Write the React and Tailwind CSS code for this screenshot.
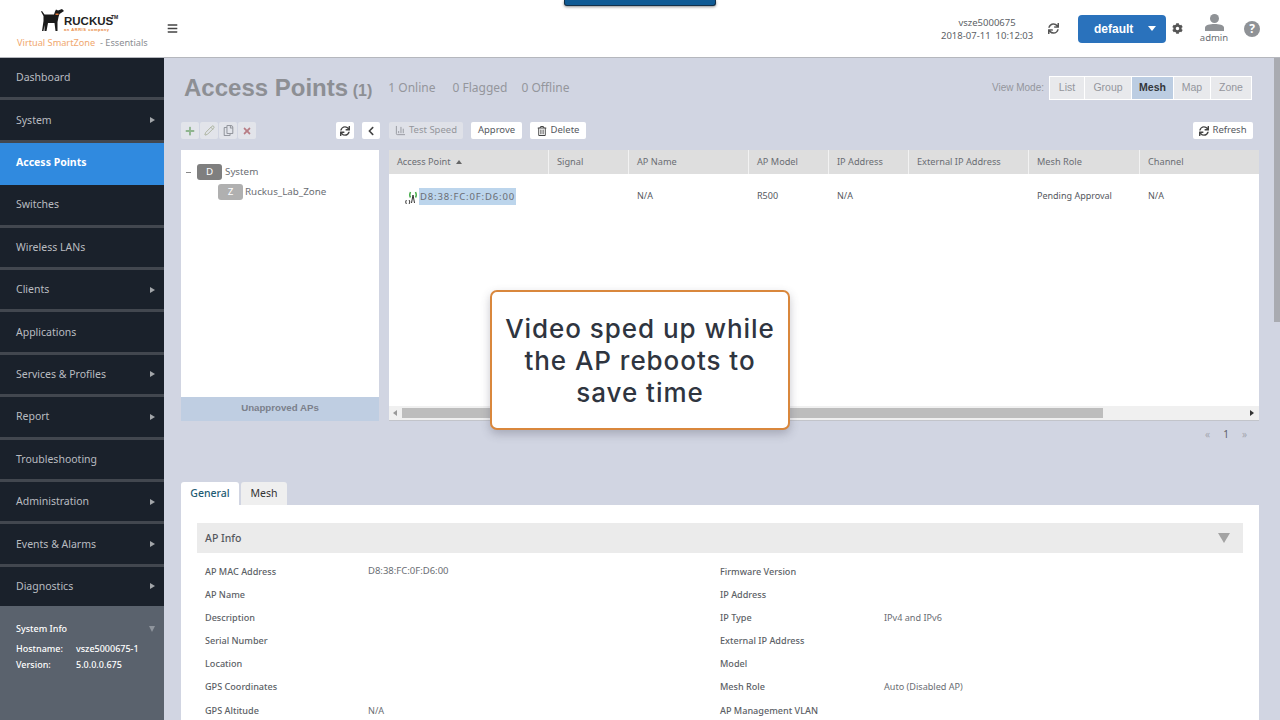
import React from "react";
import { Pencil, ChartColumn } from "lucide-react";
import { FaSync, FaCog, FaBars, FaPlus, FaRegCopy, FaTimes, FaChevronLeft, FaRegTrashAlt } from "react-icons/fa";

const F = { fontFamily: '"Noto Sans", "Open Sans", sans-serif' };
const A = { fontFamily: '"Liberation Sans", sans-serif' };

const nav = [
  ["Dashboard", 0], ["System", 1], ["Access Points", 0, true], ["Switches", 0], ["Wireless LANs", 0],
  ["Clients", 1], ["Applications", 0], ["Services & Profiles", 1], ["Report", 1], ["Troubleshooting", 0],
  ["Administration", 1], ["Events & Alarms", 1], ["Diagnostics", 1],
];

const cols = [
  ["Access Point", "w-[160px]"], ["Signal", "w-[80px]"], ["AP Name", "w-[120px]"], ["AP Model", "w-[80px]"],
  ["IP Address", "w-[80px]"], ["External IP Address", "w-[120px]"], ["Mesh Role", "w-[111px]"], ["Channel", "w-[119px]"],
];

const left = [["AP MAC Address", "D8:38:FC:0F:D6:00"], ["AP Name", ""], ["Description", ""], ["Serial Number", ""], ["Location", ""], ["GPS Coordinates", ""], ["GPS Altitude", "N/A"]];
const right = [["Firmware Version", ""], ["IP Address", ""], ["IP Type", "IPv4 and IPv6"], ["External IP Address", ""], ["Model", ""], ["Mesh Role", "Auto (Disabled AP)"], ["AP Management VLAN", ""]];

function Dog() {
  return (
    <svg width="23" height="22" viewBox="0 0 23 22" className="absolute left-[41px] top-[9px]">
      <path d="M0 2.5 L1 2 L3.5 5.5 L13 5.5 L14 2.5 L15 0.5 L17 1.5 L21 0 L23 2 L18.5 5 L17.5 8 L16.5 13 L16.5 22 L14.5 22 L13.5 14 L7 14 L5.5 22 L3.5 22 L3.5 16 L2.5 22 L1 22 L2.5 12 L2.5 7 Z" fill="#1a1a1a" />
      <rect x="14.5" y="4.5" width="3" height="1.5" fill="#e2783a" />
    </svg>
  );
}

function ToolBtn({ children, className = "" }) {
  return <div className={"h-[17px] w-[18px] rounded-[2px] flex items-center justify-center " + className}>{children}</div>;
}

function Rows({ rows, w, labelW }) {
  return (
    <div className={"flex flex-col pt-[0.5px] " + w}>
      {rows.map(([k, v]) => (
        <div key={k} className="flex items-center h-[23.2px] text-[9.1px] leading-none">
          <span className={"shrink-0 text-[#5c5f66] font-medium " + labelW}>{k}</span>
          <span className={"text-[#6a6d73] " + (v.startsWith("D8") ? "text-[9.5px]" : "text-[9.1px]")}>{v}</span>
        </div>
      ))}
    </div>
  );
}

export default function App() {
  return (
    <div style={F} className="relative h-[720px] w-[1280px] overflow-hidden bg-[#d1d5e2] flex flex-col">
      {/* header */}
      <header className="relative h-[58px] shrink-0 bg-white border-b border-[#b5b7bd] flex items-center">
        <div className="absolute left-[564px] top-0 h-[6px] w-[152px] bg-[#0f5a94] border-x border-b border-[#123049] rounded-b-[3px] shadow-[0_1px_3px_rgba(0,0,0,0.45)]" />
        <div className="relative w-[164px] h-full shrink-0">
          <Dog />
          <div className="absolute left-[64px] top-[15px] text-[11.5px] leading-[13px] font-bold text-[#222] whitespace-nowrap" style={A}>RUCKUS</div>
          <div className="absolute left-[111px] top-[15px] text-[5px] leading-[5px] font-bold text-[#222]" style={A}>TM</div>
          <div className="absolute left-[64px] top-[28px] text-[4px] leading-[4px] font-bold text-[#e8873a] whitespace-nowrap tracking-[0.55px]" style={A}>an ARRIS company</div>
          <div className="absolute left-[17px] top-[37px] text-[9.2px] leading-[12px] whitespace-nowrap"><span className="text-[#f0a76e]">Virtual SmartZone</span><span className="text-[#8a8d92]"> &nbsp;- Essentials</span></div>
        </div>
        <FaBars size={11} className="text-[#444] ml-[3px]" />
        <div className="ml-auto flex items-center">
          <div className="text-[9.5px] leading-[13px] text-[#5c5f66] text-center w-[92px] whitespace-nowrap">
            <div>vsze5000675</div>
            <div className="whitespace-pre">2018-07-11  10:12:03</div>
          </div>
          <FaSync size={11} className="text-[#555] ml-[15px]" />
          <div className="ml-[19px] h-[28px] w-[88px] bg-[#2a72bc] rounded-[4px] flex items-center text-white text-[12px] font-bold" style={A}>
            <span className="ml-[16px]">default</span>
            <span className="ml-[15px] h-0 w-0 border-x-[4px] border-x-transparent border-t-[5px] border-t-white" />
          </div>
          <FaCog size={11} className="text-[#555] ml-[6px]" />
          <div className="ml-[11px] w-[40px] flex flex-col items-center">
            <svg width="19" height="17" viewBox="0 0 19 17"><circle cx="9.5" cy="4.5" r="4.5" fill="#8f9296" /><path d="M0 17 L0 13.5 C0 11 5 10 9.5 10 C14 10 19 11 19 13.5 L19 17 Z" fill="#8f9296" /></svg>
            <span className="text-[9.5px] leading-[11px] mt-[1px] text-[#6a6d73]">admin</span>
          </div>
          <div className="ml-[10px] mr-[20px] h-[16px] w-[16px] rounded-full bg-[#8f9296] text-white text-[12px] font-bold leading-[16px] text-center">?</div>
        </div>
      </header>

      <div className="flex flex-1 min-h-0">
        {/* sidebar */}
        <aside className="w-[164px] shrink-0 bg-[#1a212b] flex flex-col">
          <div className="flex flex-col">
            {nav.map(([t, arrow, active], i) => (
              <div key={t} className={"shrink-0 flex items-center pl-[16px] pr-[9px] text-[10.5px] " + (i === 12 ? "h-[39.4px] " : "h-[42.4px] border-b-[3px] ") + (active ? "bg-[#308adf] text-white font-bold border-[#308adf]" : "text-[#b9bcc0] border-[#42474f]")}>
                <span className="pt-[1px]">{t}</span>
                {arrow ? <span className="ml-auto h-0 w-0 border-y-[3.5px] border-y-transparent border-l-[5px] border-l-[#a3a6aa]" /> : null}
              </div>
            ))}
          </div>
          <div className="flex-1 bg-[#5a626d] pl-[16px] pr-[9px] pt-[16px] text-[9px] font-medium text-white">
            <div className="flex items-center h-[13px]">
              <span>System Info</span>
              <span className="ml-auto h-0 w-0 border-x-[3.5px] border-x-transparent border-t-[6px] border-t-[#8f959d]" />
            </div>
            <div className="flex mt-[6px] leading-[16px]"><span className="w-[60px]">Hostname:</span><span>vsze5000675-1</span></div>
            <div className="flex leading-[16px]"><span className="w-[60px]">Version:</span><span>5.0.0.0.675</span></div>
          </div>
        </aside>

        {/* main */}
        <main className="relative flex-1 min-w-0 pl-[17px]">
          <div className="h-[58px] flex items-center pt-[1px] pl-[3px] w-[1078px]">
            <h1 className="text-[24px] font-bold text-[#8d8f94] leading-none" style={A}>Access Points <span className="text-[16px] -ml-[2px]">(1)</span></h1>
            <div className="ml-[16px] flex text-[12px] text-[#94969c]">
              <span>1 Online</span><span className="ml-[17px]">0 Flagged</span><span className="ml-[14px]">0 Offline</span>
            </div>
            <div className="ml-auto flex items-center mr-[7px]" style={A}>
              <span className="text-[10px] text-[#94969c] mr-[5px]">View Mode:</span>
              <div className="flex h-[24px] bg-white p-[1px] gap-[1px] text-[10.5px] text-[#94969c]">
                <div className="w-[34px] bg-[#e8e9ec] flex items-center justify-center">List</div>
                <div className="w-[46px] bg-[#e8e9ec] flex items-center justify-center">Group</div>
                <div className="w-[41px] bg-[#bccde2] text-[#33363b] font-bold flex items-center justify-center">Mesh</div>
                <div className="w-[36px] bg-[#e8e9ec] flex items-center justify-center">Map</div>
                <div className="w-[40px] bg-[#e8e9ec] flex items-center justify-center">Zone</div>
              </div>
            </div>
          </div>

          {/* toolbar */}
          <div className="h-[34px] flex items-start pt-[6px] pr-[6px] w-[1078px] text-[9.5px]">
            <div className="flex gap-[1px]">
              <ToolBtn className="bg-[#e2e4ea]"><FaPlus size={10} className="text-[#8fb58f]" /></ToolBtn>
              <ToolBtn className="bg-[#e2e4ea]"><Pencil size={11} className="text-[#a8b09a]" /></ToolBtn>
              <ToolBtn className="bg-[#e2e4ea]"><FaRegCopy size={11} className="text-[#94979e]" /></ToolBtn>
              <ToolBtn className="bg-[#e2e4ea]"><FaTimes size={10} className="text-[#b87d85]" /></ToolBtn>
            </div>
            <ToolBtn className="bg-white ml-[80px]"><FaSync size={10} className="text-[#444]" /></ToolBtn>
            <ToolBtn className="bg-white ml-[8px]"><FaChevronLeft size={10} className="text-[#444]" /></ToolBtn>
            <div className="ml-[9px] h-[17px] w-[74px] bg-[#dfe1e8] rounded-[2px] flex items-center justify-center text-[#94969c] gap-[3px]"><ChartColumn size={11} />Test Speed</div>
            <div className="ml-[8px] h-[17px] w-[51px] bg-white rounded-[2px] flex items-center justify-center text-[#55585e]">Approve</div>
            <div className="ml-[8px] h-[17px] w-[56px] bg-white rounded-[2px] flex items-center justify-center text-[#55585e] gap-[4px]"><FaRegTrashAlt size={10} className="text-[#444]" />Delete</div>
            <div className="ml-auto h-[17px] w-[60px] bg-white rounded-[2px] flex items-center justify-center text-[#55585e] gap-[3px]"><FaSync size={10} className="text-[#444]" />Refresh</div>
          </div>

          {/* panels */}
          <div className="flex gap-[10px] w-[1078px]">
            <div className="w-[198px] shrink-0 flex flex-col">
              <div className="h-[247px] bg-white pt-[14px] text-[9.8px] text-[#6a6d73]">
                <div className="flex items-center h-[16px] pl-[5px]">
                  <span className="w-[5px] h-[1px] bg-[#888]" />
                  <span className="ml-[6px] w-[25px] h-[16px] rounded-[3px] bg-[#7f7f7f] text-white text-center leading-[16px]">D</span>
                  <span className="ml-[3px]">System</span>
                </div>
                <div className="flex items-center h-[16px] pl-[37px] mt-[4px]">
                  <span className="w-[25px] h-[16px] rounded-[3px] bg-[#b0b0b0] text-white text-center leading-[16px]">Z</span>
                  <span className="ml-[2px]">Ruckus_Lab_Zone</span>
                </div>
              </div>
              <div className="h-[24px] pb-[2px] bg-[#bfcee2] text-[9.7px] font-bold text-[#7b808b] flex items-center justify-center" style={A}>Unapproved APs</div>
            </div>

            <div className="w-[870px] h-[271px] bg-white flex flex-col border-b border-[#c2c4ca]">
              <div className="flex h-[24px] bg-[#dedede] text-[9.2px] text-[#6a6d73]">
                {cols.map(([c, w], i) => (
                  <div key={c} className={"flex items-center pl-[8px] " + w + (i < 7 ? " border-r border-[#f2f2f2]" : "")}>
                    {c}
                    {i === 0 ? <span className="ml-[5px] h-0 w-0 border-x-[3.5px] border-x-transparent border-b-[4px] border-b-[#666]" /> : null}
                  </div>
                ))}
              </div>
              <div className="flex h-[44px] items-center text-[9px] text-[#55585e]">
                <div className="w-[160px] pl-[16px] flex items-center">
                  <svg width="14" height="14" viewBox="0 0 14 14" className="shrink-0 mt-[3px]">
                    <path d="M8 4 L6.5 12 M8 4 L9.5 12" stroke="#333" fill="none" />
                    <path d="M5.5 1 C4.5 3 4.5 5 5.5 6.5 M10.5 1 C11.5 3 11.5 5 10.5 6.5" stroke="#4caf50" strokeWidth="1.5" fill="none" />
                    <path d="M1.5 9 C0.5 10 0.5 12 1.5 13 M4 9 C5 10 5 12 4 13" stroke="#333" fill="none" />
                  </svg>
                  <span className="bg-[#bcd5ec] text-[#6a6d73] text-[9.5px] px-[1px] leading-[17px] tracking-[0.85px] whitespace-nowrap">D8:38:FC:0F:D6:00</span>
                </div>
                <div className="w-[80px]" />
                <div className="w-[120px] pl-[8px]">N/A</div>
                <div className="w-[80px] pl-[8px]">R500</div>
                <div className="w-[80px] pl-[8px]">N/A</div>
                <div className="w-[120px]" />
                <div className="w-[111px] pl-[8px]">Pending Approval</div>
                <div className="w-[119px] pl-[8px]">N/A</div>
              </div>
              <div className="flex-1" />
              <div className="h-[14px] bg-[#f0f0f0] flex items-center relative">
                <span className="ml-[4px] h-0 w-0 border-y-[3.5px] border-y-transparent border-r-[4px] border-r-[#999]" />
                <div className="ml-[5px] h-[10px] w-[701px] bg-[#bdbdbd]" />
                <span className="ml-auto mr-[5px] h-0 w-0 border-y-[3.5px] border-y-transparent border-l-[4px] border-l-[#333]" />
              </div>
            </div>
          </div>

          {/* pagination */}
          <div className="w-[1078px] h-[61px] flex justify-end items-start pt-[6px] pr-[12px] gap-[13px] text-[10px] text-[#a5a8b0]">
            <span>«</span><span className="text-[#5c5f66]">1</span><span>»</span>
          </div>

          {/* tabs */}
          <div className="flex gap-[2px] h-[23px] text-[10.5px]">
            <div className="w-[58px] bg-white rounded-t-[3px] flex items-center justify-center text-[#1f5c74] font-medium">General</div>
            <div className="w-[46px] bg-[#efefef] rounded-t-[3px] flex items-center justify-center text-[#333]">Mesh</div>
          </div>
          <div className="w-[1078px] h-[300px] bg-white px-[16px] pt-[18px]">
            <div className="h-[30px] bg-[#ebebeb] flex items-center pl-[8px] pr-[13px] text-[10.5px] font-medium text-[#55585e]">
              <span className="pt-[1px]">AP Info</span>
              <span className="ml-auto h-0 w-0 border-x-[6px] border-x-transparent border-t-[10px] border-t-[#a3a3a3]" />
            </div>
            <div className="flex pl-[8px] pt-[6px]">
              <Rows rows={left} w="w-[515px]" labelW="w-[163px]" />
              <Rows rows={right} w="flex-1" labelW="w-[164px]" />
            </div>
          </div>

          {/* page scrollbar */}
          <div className="absolute right-0 top-0 w-[6px] h-[264px] bg-[#a9abb1]" />
        </main>
      </div>

      {/* overlay caption */}
      <div className="absolute left-[490px] top-[290px] w-[300px] h-[140px] pt-[1px] bg-white rounded-[7px] border-2 border-[#d9873c] shadow-[0_4px_10px_rgba(70,70,90,0.3)] flex items-center justify-center text-center text-[26px] leading-[32px] tracking-[0.95px] font-medium text-[#2f3540]" style={{ fontFamily: 'Inter, sans-serif' }}>
        <div>Video sped up while<br />the AP reboots to<br />save time</div>
      </div>
    </div>
  );
}
